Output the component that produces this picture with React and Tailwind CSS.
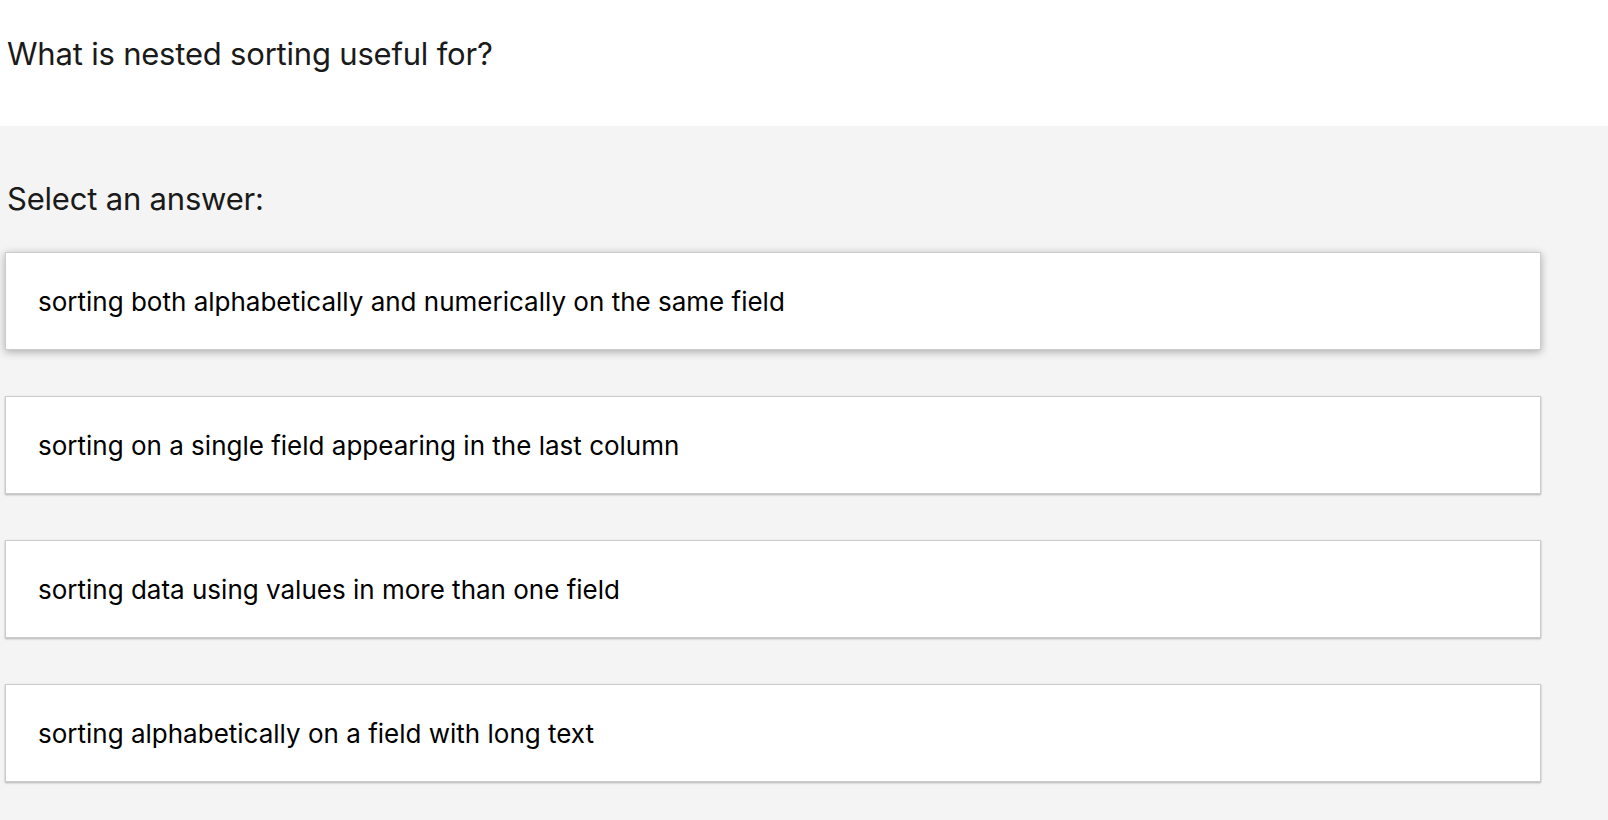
export default function App() {
  const answers = [
    "sorting both alphabetically and numerically on the same field",
    "sorting on a single field appearing in the last column",
    "sorting data using values in more than one field",
    "sorting alphabetically on a field with long text",
  ];
  return (
    <div className="min-h-[820px] bg-[#f4f4f4] text-[#1a1a1a]" style={{ fontFamily: "Inter, 'Noto Sans', sans-serif" }}>
      <div className="bg-white h-[126px] pl-[7px] pt-[35px]">
        <h1 className="text-[31px] leading-[38px] font-normal tracking-[-0.2px]">What is nested sorting useful for?</h1>
      </div>
      <div className="pl-[5px] pt-[54px]">
        <p className="pl-[2px] text-[31px] leading-[38px] tracking-[-0.2px]">Select an answer:</p>
        <div className="mt-[34px] flex flex-col gap-[46px] w-[1536px]">
          {answers.map((a, i) => (
            <div
              key={i}
              className={
                "h-[98px] bg-white border border-[#cccccc] flex items-center pl-[32px] text-[26px] text-black " +
                (i === 0
                  ? "shadow-[0_2px_8px_rgba(0,0,0,0.3)]"
                  : "shadow-[0_1px_2px_rgba(0,0,0,0.28)]")
              }
            >
              {a}
            </div>
          ))}
        </div>
      </div>
    </div>
  );
}
